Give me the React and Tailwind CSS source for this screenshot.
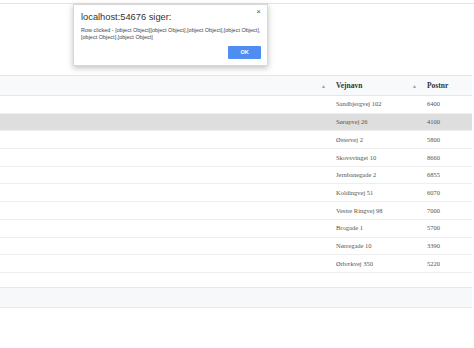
import React from "react";

const rows = [
  ["Sandbjergvej 102", "6400"],
  ["Sørupvej 26", "4100"],
  ["Østervej 2", "5800"],
  ["Skovsvinget 10", "8660"],
  ["Jernbanegade 2", "6855"],
  ["Koldingvej 51", "6070"],
  ["Vestre Ringvej 98", "7000"],
  ["Brogade 1", "5700"],
  ["Nørregade 10", "3390"],
  ["Ørbækvej 350", "5220"],
];

const Arrow = () => <span className="text-[5px] text-gray-400 leading-none">▲</span>;

export default function App() {
  return (
    <div className="relative w-[474px] h-[348px] bg-white overflow-hidden" style={{ fontFamily: '"Liberation Serif", serif' }}>
      {/* page top line */}
      <div className="h-[3px]" />
      <div className="h-px bg-[#e4e4e4]" />
      <div className="h-[71px]" />

      {/* table */}
      <div className="w-[472px]">
        <div className="flex items-center h-[21px] bg-[#f8f9fa] border-t border-b border-[#e6e6e6] text-[7.5px] font-bold text-[#333]">
          <div className="w-[321px]" />
          <div className="w-[15px]"><Arrow /></div>
          <div className="w-[76px]">Vejnavn</div>
          <div className="w-[15px]"><Arrow /></div>
          <div>Postnr</div>
        </div>
        {rows.map(([street, zip], i) => (
          <div key={street} className={`flex items-center h-[17.7px] border-b border-[#eeeeee] text-[6.5px] text-[#555] ${i === 1 ? "bg-[#dedede]" : ""}`}>
            <div className="w-[336px]" />
            <div className="w-[91px]">{street}</div>
            <div>{zip}</div>
          </div>
        ))}
        <div className="h-[14px]" />
        <div className="h-[21px] bg-[#f7f8fa] border-t border-b border-[#e8e8e8]" />
      </div>

      {/* alert dialog */}
      <div className="absolute left-[73px] top-[4px] w-[195px] h-[62px] bg-white border border-[#d8d8d8] shadow-[0_2px_6px_rgba(0,0,0,0.25)]" style={{ fontFamily: '"Liberation Sans", Arial, sans-serif' }}>
        <div className="absolute right-[6px] top-[1px] text-[8px] text-[#555]">×</div>
        <div className="pl-[7px] pt-[6px] text-[9.3px] text-[#333]">localhost:54676 siger:</div>
        <div className="pl-[7px] pt-[2px] pr-[4px] text-[5.5px] leading-[7px] text-[#444]">
          Row clicked - [object Object][object Object],[object Object],[object Object],[object Object],[object Object]
        </div>
        <div className="absolute right-[6px] bottom-[6px] w-[33px] h-[13px] bg-[#4e8ef2] rounded-[1px] flex items-center justify-center text-[5.5px] font-bold text-white">OK</div>
      </div>
    </div>
  );
}
